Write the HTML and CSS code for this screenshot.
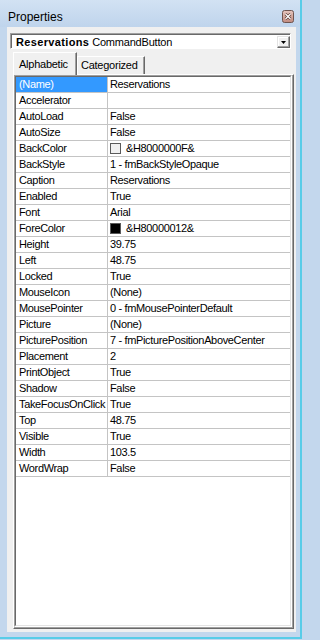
FILE: index.html
```html
<!DOCTYPE html>
<html>
<head>
<meta charset="utf-8">
<title>Properties</title>
<link rel="stylesheet" href="styles.css">
</head>
<body>
<div class="window">
  <div class="titlebar">
    <span class="title">Properties</span>
    <svg class="close" width="12" height="13" viewBox="0 0 12 13">
      <defs>
        <linearGradient id="cg" x1="0" y1="0" x2="0" y2="1">
          <stop offset="0" stop-color="#e6c6be"/>
          <stop offset="1" stop-color="#c18a7e"/>
        </linearGradient>
      </defs>
      <rect x="0.5" y="0.5" width="11" height="12" rx="2" fill="url(#cg)" stroke="#6e5550"/>
      <path d="M3.5 4 L8.5 9 M8.5 4 L3.5 9" stroke="#5a3a34" stroke-width="2.6"/>
      <path d="M3.5 4 L8.5 9 M8.5 4 L3.5 9" stroke="#ffffff" stroke-width="1.3"/>
    </svg>
  </div>
  <div class="client">
    <div class="combo">
      <span class="combo-text"><b>Reservations</b> CommandButton</span>
      <span class="drop">
        <svg width="5" height="3" viewBox="0 0 5 3"><path d="M0 0 H5 L2.5 3 Z" fill="#000"/></svg>
      </span>
    </div>
    <div class="tabs">
      <div class="tab active">Alphabetic</div>
      <div class="tab">Categorized</div>
    </div>
    <div class="panel">
      <div class="panel-inner">
        <div class="grid-outer">
          <div class="grid">
            <div class="row sel"><div class="name">(Name)</div><div class="val">Reservations</div></div>
            <div class="row"><div class="name">Accelerator</div><div class="val"></div></div>
            <div class="row"><div class="name">AutoLoad</div><div class="val">False</div></div>
            <div class="row"><div class="name">AutoSize</div><div class="val">False</div></div>
            <div class="row"><div class="name">BackColor</div><div class="val"><span class="swatch light"></span>&amp;H8000000F&amp;</div></div>
            <div class="row"><div class="name">BackStyle</div><div class="val">1 - fmBackStyleOpaque</div></div>
            <div class="row"><div class="name">Caption</div><div class="val">Reservations</div></div>
            <div class="row"><div class="name">Enabled</div><div class="val">True</div></div>
            <div class="row"><div class="name">Font</div><div class="val">Arial</div></div>
            <div class="row"><div class="name">ForeColor</div><div class="val"><span class="swatch dark"></span>&amp;H80000012&amp;</div></div>
            <div class="row"><div class="name">Height</div><div class="val">39.75</div></div>
            <div class="row"><div class="name">Left</div><div class="val">48.75</div></div>
            <div class="row"><div class="name">Locked</div><div class="val">True</div></div>
            <div class="row"><div class="name">MouseIcon</div><div class="val">(None)</div></div>
            <div class="row"><div class="name">MousePointer</div><div class="val">0 - fmMousePointerDefault</div></div>
            <div class="row"><div class="name">Picture</div><div class="val">(None)</div></div>
            <div class="row"><div class="name">PicturePosition</div><div class="val">7 - fmPicturePositionAboveCenter</div></div>
            <div class="row"><div class="name">Placement</div><div class="val">2</div></div>
            <div class="row"><div class="name">PrintObject</div><div class="val">True</div></div>
            <div class="row"><div class="name">Shadow</div><div class="val">False</div></div>
            <div class="row"><div class="name">TakeFocusOnClick</div><div class="val">True</div></div>
            <div class="row"><div class="name">Top</div><div class="val">48.75</div></div>
            <div class="row"><div class="name">Visible</div><div class="val">True</div></div>
            <div class="row"><div class="name">Width</div><div class="val">103.5</div></div>
            <div class="row"><div class="name">WordWrap</div><div class="val">False</div></div>
          </div>
        </div>
      </div>
    </div>
  </div>
</div>
</body>
</html>
```
FILE: styles.css
```css
* { box-sizing: border-box; }
html, body { margin: 0; padding: 0; }
body {
  width: 304px;
  height: 640px;
  overflow: hidden;
  background: #c3d7ed;
  font-family: "Liberation Sans", Arial, sans-serif;
  color: #000;
}
.window {
  width: 302px;
  height: 639px;
  border-right: 2px solid #58cce8;
  border-bottom: 2px solid #58cce8;
  background: linear-gradient(#d2e2f3 0, #bfd4ec 27px, #c3d7ed 27px);
  display: flex;
  flex-direction: column;
  padding: 0 4px 5px 7px;
}
.titlebar {
  height: 27px;
  flex: none;
  display: flex;
  align-items: flex-start;
  padding-left: 1px;
}
.title {
  font-size: 12px;
  line-height: 14px;
  margin-top: 10px;
  color: #000;
}
.close {
  margin-left: auto;
  margin-right: 2px;
  margin-top: 10px;
}
.client {
  flex: 1;
  background: #f0f0f0;
  display: flex;
  flex-direction: column;
  padding: 6px 2px 3px 3px;
}
.combo {
  flex: none;
  height: 16px;
  margin-right: 3px;
  background: #fff;
  border: 1px solid;
  border-color: #a0a0a0 #ffffff #ffffff #a0a0a0;
  box-shadow: inset 1px 1px 0 #696969;
  display: flex;
  align-items: center;
  padding: 1px 0 0 5px;
}
.combo-text {
  font-size: 11px;
  line-height: 12px;
  letter-spacing: -0.2px;
  white-space: nowrap;
}
.combo-text b {
  letter-spacing: 0.35px;
}
.drop {
  margin-left: auto;
  width: 13px;
  height: 12px;
  background: #f0f0f0;
  border: 1px solid;
  border-color: #e3e3e3 #696969 #696969 #e3e3e3;
  box-shadow: inset -1px -1px 0 #a0a0a0, inset 1px 1px 0 #fff;
  display: flex;
  align-items: center;
  justify-content: center;
  padding-top: 1px;
}
.drop svg { display: block; }
.tabs {
  flex: none;
  height: 22px;
  margin-top: 3px;
  margin-left: 3px;
  display: flex;
  align-items: flex-end;
}
.tab {
  font-size: 11px;
  line-height: 13px;
  letter-spacing: -0.25px;
  background: #f0f0f0;
  border-left: 1px solid #fff;
  border-top: 1px solid #fff;
  border-right: 1px solid #696969;
  box-shadow: inset -1px 0 0 #a0a0a0;
  white-space: nowrap;
}
.tab.active {
  width: 64px;
  height: 23px;
  margin-bottom: -1px;
  padding: 5px 0 0 5px;
  position: relative;
  z-index: 1;
}
.tab:not(.active) {
  width: 68px;
  height: 18px;
  padding: 2px 0 0 3px;
}
.panel {
  flex: 1;
  margin-left: 3px;
  border: 1px solid;
  border-color: #fff #696969 #696969 #fff;
  display: flex;
}
.panel-inner {
  flex: 1;
  border-right: 1px solid #a0a0a0;
  border-bottom: 1px solid #a0a0a0;
  display: flex;
}
.grid-outer {
  flex: 1;
  border: 1px solid;
  border-color: #a0a0a0 #fff #fff #a0a0a0;
  display: flex;
}
.grid {
  flex: 1;
  background: #fff;
  border: 1px solid;
  border-color: #696969 #e3e3e3 #e3e3e3 #696969;
  display: flex;
  flex-direction: column;
}
.row {
  display: flex;
  height: 16px;
  border-bottom: 1px solid #c4c4c4;
  font-size: 11px;
  line-height: 15px;
  letter-spacing: -0.35px;
  white-space: nowrap;
}
.name {
  width: 92px;
  flex: none;
  padding-left: 3px;
  border-right: 1px solid #c4c4c4;
  overflow: hidden;
}
.val {
  flex: 1;
  padding-left: 2px;
  display: flex;
  align-items: center;
  overflow: hidden;
}
.row.sel .name {
  background: #3399ff;
  color: #fff;
}
.swatch {
  display: inline-block;
  width: 11px;
  height: 11px;
  border: 1px solid #5a5a5a;
  margin-right: 5px;
  flex: none;
}
.swatch.light { background: #f0f0f0; }
.swatch.dark { background: #000; }
```
